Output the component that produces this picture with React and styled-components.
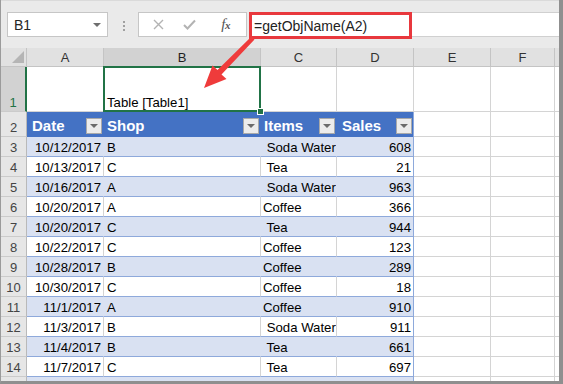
import React from "react";
import styled, { createGlobalStyle } from "styled-components";

const Global = createGlobalStyle`
  html, body { margin: 0; padding: 0; background: #fff; }
  body { font-family: "Liberation Sans", Arial, sans-serif; }
`;

const Frame = styled.div`
  position: relative;
  width: 563px;
  height: 384px;
  box-sizing: border-box;
  border-left: 1px solid #9b9b9b;
  border-right: 4px solid #8f8f8f;
  border-bottom: 3px solid #8f8f8f;
  background: #fff;
  overflow: hidden;
  display: flex;
  flex-direction: column;
`;

const Toolbar = styled.div`
  height: 48px;
  box-sizing: border-box;
  flex: none;
  background: #eaeaea;
  border-top: 1px solid #dadada;
  padding: 11px 0 0 6px;
  display: flex;
  align-items: flex-start;
`;

const NameBox = styled.div`
  width: 101px;
  height: 25px;
  box-sizing: border-box;
  background: #fff;
  border: 1px solid #c6c6c6;
  display: flex;
  align-items: center;
  justify-content: space-between;
  padding: 0 6px 0 6px;
  font-size: 14px;
  color: #262626;
`;

const Caret = styled.span`
  width: 0;
  height: 0;
  border-left: 4px solid transparent;
  border-right: 4px solid transparent;
  border-top: 4px solid #6e6e6e;
`;

const Dots = styled.div`
  margin: 9px 0 0 15px;
  display: flex;
  flex-direction: column;
  gap: 2px;
  & > span {
    width: 2px;
    height: 2px;
    background: #a0a0a0;
  }
`;

const ButtonsBox = styled.div`
  margin-left: 13px;
  width: 109px;
  height: 25px;
  box-sizing: border-box;
  background: #fff;
  border: 1px solid #c6c6c6;
  display: flex;
  align-items: center;
  padding-left: 4px;
`;

const ToolSlot = styled.div`
  width: ${(p) => p.$w}px;
  height: 100%;
  display: flex;
  align-items: center;
  justify-content: center;
`;

const Fx = styled.span`
  font-family: "Liberation Serif", "Times New Roman", serif;
  font-style: italic;
  font-size: 15px;
  color: #555;
  letter-spacing: -0.5px;
  & > small {
    font-size: 11px;
    font-weight: bold;
  }
`;

const FormulaBar = styled.div`
  margin-left: 2px;
  flex: 1;
  height: 25px;
  box-sizing: border-box;
  background: #fff;
  border-top: 1px solid #d0d0d0;
  border-bottom: 1px solid #d0d0d0;
  display: flex;
`;

const Highlight = styled.div`
  width: 163px;
  height: 27px;
  margin-top: -1px;
  box-sizing: border-box;
  border: 3px solid #e8383d;
  padding-left: 2px;
  display: flex;
  align-items: center;
  font-size: 14px;
  color: #222;
`;

const Sheet = styled.div`
  flex: 1;
  display: grid;
  grid-template-columns: 26px 77px 157px 76px 77px 77px 64px 1fr;
  grid-template-rows: 19px 45px 25px repeat(13, 20px);
  overflow: hidden;
  font-size: 13.2px;
  color: #000;
`;

const Corner = styled.div`
  position: relative;
  background: #e1e1e1;
  border-right: 1px solid #c4c4c4;
  border-bottom: 1px solid #c4c4c4;
  &::after {
    content: "";
    position: absolute;
    right: 2px;
    bottom: 3px;
    width: 0;
    height: 0;
    border-left: 12px solid transparent;
    border-bottom: 12px solid #b5b5b5;
  }
`;

const ColHeader = styled.div`
  background: ${(p) => (p.$selected ? "#d2d2d2" : "#e1e1e1")};
  border-right: 1px solid #c4c4c4;
  border-bottom: 1px solid ${(p) => (p.$selected ? "#217346" : "#c4c4c4")};
  display: flex;
  align-items: center;
  justify-content: center;
  font-size: 13px;
  color: ${(p) => (p.$selected ? "#1f1f1f" : "#333")};
`;

const RowHeader = styled.div`
  background: ${(p) => (p.$selected ? "#d2d2d2" : "#e6e6e6")};
  border-right: ${(p) => (p.$selected ? "2px solid #217346" : "1px solid #b9b9b9")};
  border-bottom: 1px solid #cbcbcb;
  display: flex;
  align-items: flex-end;
  justify-content: center;
  line-height: 17px;
  font-size: 13px;
  color: ${(p) => (p.$selected ? "#217346" : "#444")};
`;

const Cell = styled.div`
  position: relative;
  box-sizing: border-box;
  min-width: 0;
  background: ${(p) => (p.$band ? "#d9e1f2" : "#fff")};
  border-bottom: 1px solid ${(p) => (p.$table ? "#8ea9db" : "#d4d4d4")};
  border-right: 1px solid
    ${(p) => (p.$edge ? "#8ea9db" : p.$band ? "#d9e1f2" : "#d4d4d4")};
  display: flex;
  align-items: flex-end;
  justify-content: ${(p) => (p.$right ? "flex-end" : "flex-start")};
  padding: 0 2px 0 ${(p) => p.$pl ?? 2}px;
  line-height: 16px;
  white-space: pre;
  overflow: hidden;
`;

const SelectedCell = styled(Cell)`
  overflow: visible;
  z-index: 3;
  padding-left: 3px;
  &::after {
    content: "";
    position: absolute;
    left: -1px;
    top: -1px;
    right: -1px;
    bottom: -1px;
    border: 2px solid #217346;
    pointer-events: none;
  }
  &::before {
    content: "";
    position: absolute;
    right: -4px;
    bottom: -4px;
    width: 5px;
    height: 5px;
    background: #217346;
    border: 1px solid #fff;
    z-index: 4;
  }
`;

const HeadCell = styled.div`
  box-sizing: border-box;
  background: #4472c4;
  border-right: 1px solid ${(p) => (p.$edge ? "#8ea9db" : "#4472c4")};
  display: flex;
  align-items: flex-end;
  justify-content: space-between;
  padding: 0 1px 2px ${(p) => p.$pl}px;
  color: #fff;
  font-weight: bold;
  font-size: 15px;
  line-height: 18px;
`;

const Filter = styled.span`
  width: 16px;
  height: 16px;
  box-sizing: border-box;
  background: #ececec;
  border: 1px solid #a9a9a9;
  display: flex;
  align-items: center;
  justify-content: center;
  margin-bottom: 1px;
  &::after {
    content: "";
    width: 0;
    height: 0;
    border-left: 4px solid transparent;
    border-right: 4px solid transparent;
    border-top: 4px solid #6b6b6b;
  }
`;

const Overlay = styled.svg`
  position: absolute;
  left: -1px;
  top: 0;
  pointer-events: none;
  z-index: 10;
`;

const data = [
  ["10/12/2017", "B", " Soda Water", 608],
  ["10/13/2017", "C", " Tea", 21],
  ["10/16/2017", "A", " Soda Water", 963],
  ["10/20/2017", "A", "Coffee", 366],
  ["10/20/2017", "C", " Tea", 944],
  ["10/22/2017", "C", "Coffee", 123],
  ["10/28/2017", "B", "Coffee", 289],
  ["10/30/2017", "C", "Coffee", 18],
  ["11/1/2017", "A", "Coffee", 910],
  ["11/3/2017", "B", " Soda Water", 911],
  ["11/4/2017", "B", " Tea", 661],
  ["11/7/2017", "C", " Tea", 697],
  ["", "", "", ""],
];

const cols = ["A", "B", "C", "D", "E", "F", ""];

export default function App() {
  return (
    <>
      <Global />
      <Frame>
        <Toolbar>
          <NameBox>
            <span>B1</span>
            <Caret />
          </NameBox>
          <Dots>
            <span />
            <span />
            <span />
          </Dots>
          <ButtonsBox>
            <ToolSlot $w={32}>
              <svg width="11" height="11" viewBox="0 0 11 11">
                <path d="M1 1L10 10M10 1L1 10" stroke="#b3b3b3" strokeWidth="1.4" fill="none" />
              </svg>
            </ToolSlot>
            <ToolSlot $w={32}>
              <svg width="13" height="11" viewBox="0 0 13 11">
                <path d="M1 6L4.5 9.5L12 1.5" stroke="#b3b3b3" strokeWidth="2" fill="none" />
              </svg>
            </ToolSlot>
            <ToolSlot $w={42}>
              <Fx>
                f<small>x</small>
              </Fx>
            </ToolSlot>
          </ButtonsBox>
          <FormulaBar>
            <Highlight>=getObjName(A2)</Highlight>
          </FormulaBar>
        </Toolbar>
        <Sheet>
          <Corner />
          {cols.map((c, i) => (
            <ColHeader key={"h" + i} $selected={c === "B"}>
              {c}
            </ColHeader>
          ))}

          <RowHeader $selected>1</RowHeader>
          <Cell />
          <SelectedCell>Table [Table1]</SelectedCell>
          <Cell />
          <Cell />
          <Cell />
          <Cell />
          <Cell />

          <RowHeader>2</RowHeader>
          <HeadCell $pl={5}>
            Date<Filter />
          </HeadCell>
          <HeadCell $pl={3}>
            Shop<Filter />
          </HeadCell>
          <HeadCell $pl={3}>
            Items<Filter />
          </HeadCell>
          <HeadCell $pl={5} $edge>
            Sales<Filter />
          </HeadCell>
          <Cell />
          <Cell />
          <Cell />

          {data.map((r, i) => {
            const band = i % 2 === 0;
            const last = i === data.length - 1;
            return (
              <React.Fragment key={"r" + i}>
                <RowHeader>{last ? "" : i + 3}</RowHeader>
                <Cell $table $band={band} $right>
                  {r[0]}
                </Cell>
                <Cell $table $band={band} $pl={3}>
                  {r[1]}
                </Cell>
                <Cell $table $band={band}>
                  {r[2]}
                </Cell>
                <Cell $table $band={band} $right $edge>
                  {r[3]}
                </Cell>
                <Cell />
                <Cell />
                <Cell />
              </React.Fragment>
            );
          })}
        </Sheet>
        <Overlay width="563" height="384" viewBox="0 0 563 384">
          <polygon
            points="251.5,36.5 254.5,39.5 221.5,74.5 226.5,79 204,88 212.5,65.5 217.5,70"
            fill="#ef3b3b"
          />
        </Overlay>
      </Frame>
    </>
  );
}
